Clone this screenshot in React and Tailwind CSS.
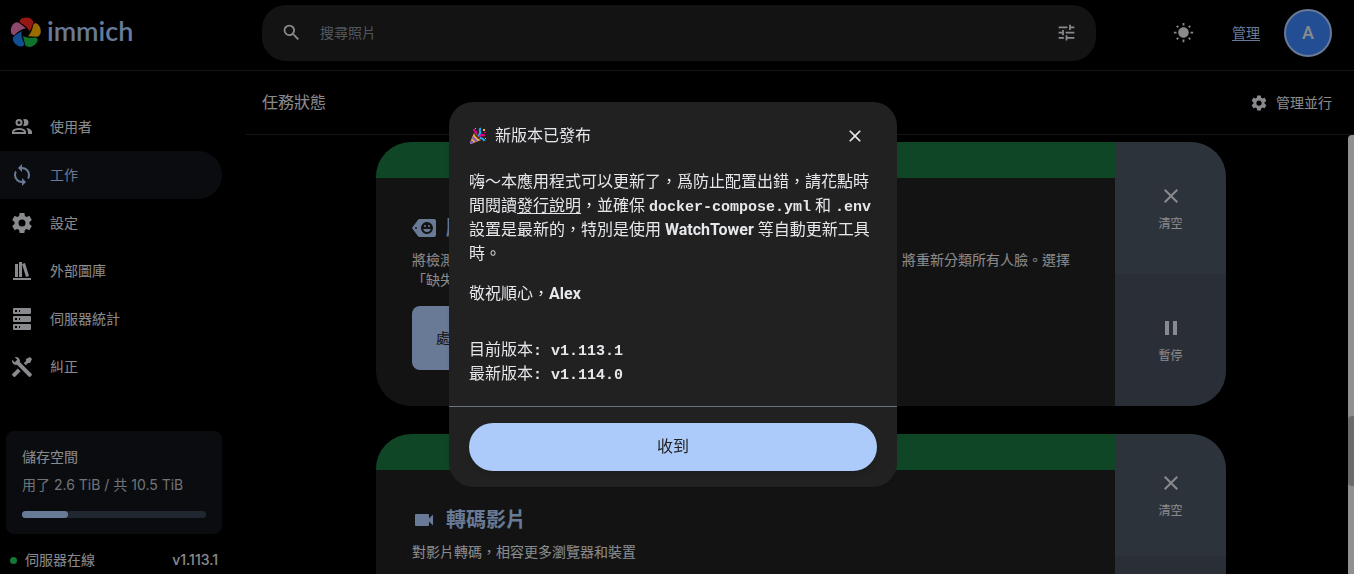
import clsx from "clsx";

// 24x24 icon paths
const paths = {
  magnify:
    "M9.5,3A6.5,6.5 0 0,1 16,9.5C16,11.11 15.41,12.59 14.44,13.73L14.71,14H15.5L20.5,19L19,20.5L14,15.5V14.71L13.73,14.44C12.59,15.41 11.11,16 9.5,16A6.5,6.5 0 0,1 3,9.5A6.5,6.5 0 0,1 9.5,3M9.5,5C7,5 5,7 5,9.5C5,12 7,14 9.5,14C12,14 14,12 14,9.5C14,7 12,5 9.5,5Z",
  tune: "M3,17V19H9V17H3M3,5V7H13V5H3M13,21V19H21V17H13V15H11V21H13M7,9V11H3V13H7V15H9V9H7M21,13V11H11V13H21M15,9H17V7H21V5H17V3H15V9Z",
  sunny:
    "M3.55 19.09L4.96 20.5L6.76 18.71L5.34 17.29M12 6C8.69 6 6 8.69 6 12S8.69 18 12 18 18 15.31 18 12C18 8.68 15.31 6 12 6M20 13H23V11H20M17.24 18.71L19.04 20.5L20.45 19.09L18.66 17.29M20.45 5L19.04 3.6L17.24 5.39L18.66 6.81M13 1H11V4H13M6.76 5.39L4.96 3.6L3.55 5L5.34 6.81L6.76 5.39M1 13H4V11H1M13 20H11V23H13",
  users:
    "M13.07 10.41A5 5 0 0 0 13.07 4.59A3.39 3.39 0 0 1 15 4A3.5 3.5 0 0 1 15 11A3.39 3.39 0 0 1 13.07 10.41M5.5 7.5A3.5 3.5 0 1 1 9 11A3.5 3.5 0 0 1 5.5 7.5M7.5 7.5A1.5 1.5 0 1 0 9 6A1.5 1.5 0 0 0 7.5 7.5M16 17V19H2V17S2 13 9 13 16 17 16 17M14 17C13.86 16.22 12.67 15 9 15S4.07 16.31 4 17M15.95 13A5.32 5.32 0 0 1 18 17V19H22V17S22 13.37 15.94 13Z",
  sync: "M12,18A6,6 0 0,1 6,12C6,11 6.25,10.03 6.7,9.2L5.24,7.74C4.46,8.97 4,10.43 4,12A8,8 0 0,0 12,20V23L16,19L12,15M12,4V1L8,5L12,9V6A6,6 0 0,1 18,12C18,13 17.75,13.97 17.3,14.8L18.76,16.26C19.54,15.03 20,13.57 20,12A8,8 0 0,0 12,4Z",
  cog: "M12,15.5A3.5,3.5 0 0,1 8.5,12A3.5,3.5 0 0,1 12,8.5A3.5,3.5 0 0,1 15.5,12A3.5,3.5 0 0,1 12,15.5M19.43,12.97C19.47,12.65 19.5,12.33 19.5,12C19.5,11.67 19.47,11.34 19.43,11L21.54,9.37C21.73,9.22 21.78,8.95 21.66,8.73L19.66,5.27C19.54,5.05 19.27,4.96 19.05,5.05L16.56,6.05C16.04,5.66 15.5,5.32 14.87,5.07L14.5,2.42C14.46,2.18 14.25,2 14,2H10C9.75,2 9.54,2.18 9.5,2.42L9.13,5.07C8.5,5.32 7.96,5.66 7.44,6.05L4.95,5.05C4.73,4.96 4.46,5.05 4.34,5.27L2.34,8.73C2.21,8.95 2.27,9.22 2.46,9.37L4.57,11C4.53,11.34 4.5,11.67 4.5,12C4.5,12.33 4.53,12.65 4.57,12.97L2.46,14.63C2.27,14.78 2.21,15.05 2.34,15.27L4.34,18.73C4.46,18.95 4.73,19.03 4.95,18.95L7.44,17.94C7.96,18.34 8.5,18.68 9.13,18.93L9.5,21.58C9.54,21.82 9.75,22 10,22H14C14.25,22 14.46,21.82 14.5,21.58L14.87,18.93C15.5,18.67 16.04,18.34 16.56,17.94L19.05,18.95C19.27,19.03 19.54,18.95 19.66,18.73L21.66,15.27C21.78,15.05 21.73,14.78 21.54,14.63L19.43,12.97Z",
  bookshelf: "M9 3V18H12V3H9M12 5L16 18L19 17L15 4L12 5M5 5V18H8V5H5M3 19V21H21V19H3Z",
  server:
    "M4,1H20A1,1 0 0,1 21,2V6A1,1 0 0,1 20,7H4A1,1 0 0,1 3,6V2A1,1 0 0,1 4,1M4,9H20A1,1 0 0,1 21,10V14A1,1 0 0,1 20,15H4A1,1 0 0,1 3,14V10A1,1 0 0,1 4,9M4,17H20A1,1 0 0,1 21,18V22A1,1 0 0,1 20,23H4A1,1 0 0,1 3,22V18A1,1 0 0,1 4,17M9,5H10V3H9V5M9,13H10V11H9V13M9,21H10V19H9V21M5,3V5H7V3H5M5,11V13H7V11H5M5,19V21H7V19H5Z",
  tools:
    "M21.71 20.29L20.29 21.71A1 1 0 0 1 18.88 21.71L7 9.85A3.81 3.81 0 0 1 6 10A4 4 0 0 1 2.22 4.7L4.76 7.24L5.29 6.71L6.71 5.29L7.24 4.76L4.7 2.22A4 4 0 0 1 10 6A3.81 3.81 0 0 1 9.85 7L21.71 18.88A1 1 0 0 1 21.71 20.29M2.29 18.88A1 1 0 0 0 2.29 20.29L3.71 21.71A1 1 0 0 0 5.12 21.71L10.59 16.25L7.76 13.42M20 2L16 4V6L13.83 8.17L15.83 10.17L18 8H20L22 4Z",
  close:
    "M19,6.41L17.59,5L12,10.59L6.41,5L5,6.41L10.59,12L5,17.59L6.41,19L12,13.41L17.59,19L19,17.59L13.41,12L19,6.41Z",
  pause: "M14,19H18V5H14M6,19H10V5H6V19Z",
  video:
    "M17,10.5V7A1,1 0 0,0 16,6H4A1,1 0 0,0 3,7V17A1,1 0 0,0 4,18H16A1,1 0 0,0 17,17V13.5L21,17.5V6.5L17,10.5Z",
  tagFaces:
    "M15,18C11.68,18 9,15.31 9,12C9,8.68 11.68,6 15,6A6,6 0 0,1 21,12A6,6 0 0,1 15,18M4,13A1,1 0 0,1 3,12A1,1 0 0,1 4,11A1,1 0 0,1 5,12A1,1 0 0,1 4,13M22,3H7.63C6.97,3 6.38,3.32 6,3.81L0,12L6,20.18C6.38,20.68 6.97,21 7.63,21H22A2,2 0 0,0 24,19V5C24,3.89 23.1,3 22,3M13,11A1,1 0 0,0 14,10A1,1 0 0,0 13,9A1,1 0 0,0 12,10A1,1 0 0,0 13,11M15,16C16.86,16 18.35,14.72 18.8,13H11.2C11.65,14.72 13.14,16 15,16M17,11A1,1 0 0,0 18,10A1,1 0 0,0 17,9A1,1 0 0,0 16,10A1,1 0 0,0 17,11Z",
};

function Icon({ name, className = "size-6" }) {
  return (
    <svg viewBox="0 0 24 24" fill="currentColor" aria-hidden="true" className={clsx("shrink-0", className)}>
      <path d={paths[name]} />
    </svg>
  );
}

const petals = ["#ffb400", "#18c249", "#1e83f7", "#ed79b5", "#fa2921"];

function Logo() {
  return (
    <a href="#home" className="flex items-center gap-1.5 text-[#adcbfa]">
      <svg viewBox="-47 -47 93 93" aria-hidden="true" className="size-[31px]">
        {petals.map((color, i) => (
          <path
            key={color}
            fill={color}
            transform={`rotate(${i * 72})`}
            d="M7 11 L34 12.500 Q41 12 45 1 C47 -12 40 -26 30 -28 Q24 -29 22.500 -22 C20 -8 15 3 7 11Z"
          />
        ))}
      </svg>
      <span className="pb-1 font-['Lato',sans-serif] text-[27px] leading-8 font-semibold">immich</span>
    </a>
  );
}

function PartyPopper() {
  return (
    <svg viewBox="0 0 18 18" aria-hidden="true" className="size-[18px] shrink-0">
      <path d="M5 6 L12 13 L2 17 Q0.500 17 1 15.500Z" fill="#fbb33c" />
      <path d="M4 9 L9 14 L6.500 15 L3 11.500Z M2.500 13 L5 15.500 L2 17 Q0.500 17 1 15.500Z" fill="#7a5cc8" />
      <path d="M5 6 Q8 6 10.500 9 Q12.500 11.500 12 13 Q9 12.500 7 10 Q5 8 5 6Z" fill="#5b3a1e" />
      <path d="M9 9 Q12 7 11 4 Q10 2 12 1.500" fill="none" stroke="#22a7f0" strokeWidth="2" />
      <path d="M10 10 Q12 7 16 8.500" fill="none" stroke="#e3008c" strokeWidth="2" />
      <path d="M11 11 Q14 11 15.500 14" fill="none" stroke="#22a7f0" strokeWidth="2" />
      <path d="M4 2h2v2h-2z M5 4h3v3h-2z M15 5h2v1h-2z" fill="#e3008c" />
      <path d="M14 2h2v2h-2z M6 1h1v1h-1z M16 11h1v1h-1z" fill="#fbb33c" />
    </svg>
  );
}

function Header() {
  return (
    <header className="flex h-[71px] shrink-0 items-center border-b border-[#242424] pr-[22px] pb-[5px]">
      <div className="w-[262px] shrink-0 pl-2.5">
        <Logo />
      </div>
      <form className="flex h-14 flex-1 items-center rounded-3xl bg-[#212121] px-[19px]">
        <button type="button" aria-label="搜尋">
          <Icon name="magnify" className="size-[21px]" />
        </button>
        <input
          type="text"
          aria-label="搜尋照片"
          placeholder="搜尋照片"
          className="min-w-0 flex-1 bg-transparent pl-[18px] text-sm outline-none placeholder:text-[#8a909b]"
        />
        <button type="button" aria-label="篩選">
          <Icon name="tune" className="size-[21px]" />
        </button>
      </form>
      <div className="flex shrink-0 items-center pl-[65px]">
        <button type="button" aria-label="切換主題" className="p-3">
          <Icon name="sunny" className="size-[21px]" />
        </button>
        <a href="#admin" className="pr-6 pl-6.5 text-sm text-[#adcbfa] underline underline-offset-2">
          管理
        </a>
        <button
          type="button"
          aria-label="帳戶"
          className="flex size-12 items-center justify-center rounded-full border-2 border-[#adcbfa] bg-[#3b82f6] text-lg font-medium"
        >
          A
        </button>
      </div>
    </header>
  );
}

const navItems = [
  { icon: "users", label: "使用者" },
  { icon: "sync", label: "工作", active: true },
  { icon: "cog", label: "設定" },
  { icon: "bookshelf", label: "外部圖庫" },
  { icon: "server", label: "伺服器統計" },
  { icon: "tools", label: "糾正" },
];

function Sidebar() {
  return (
    <aside className="w-[222px] shrink-0 overflow-hidden pt-8 font-['Inter','Noto_Sans_CJK_TC',sans-serif] text-sm">
      <nav>
        {navItems.map(({ icon, label, active }) => (
          <a
            key={label}
            href="#nav"
            className={clsx(
              "flex h-12 items-center gap-4 rounded-r-full pl-2.5",
              active && "bg-[#adcbfa]/10 text-[#adcbfa]",
            )}
          >
            <Icon name={icon} />
            {label}
          </a>
        ))}
      </nav>
      <section className="mt-10 ml-1.5 rounded-lg bg-[#adcbfa]/10 p-4">
        <h2>儲存空間</h2>
        <p className="mt-2 text-[#bcc0c8]">用了 2.6 TiB / 共 10.5 TiB</p>
        <div className="mt-4 h-[7px] rounded-full bg-[#374151]">
          <div className="h-full w-1/4 rounded-full bg-[#adcbfa]" />
        </div>
      </section>
      <div className="mt-4 flex items-center gap-2 pr-1 pl-2.5">
        <span className="size-[7px] rounded-full bg-[#22c55e]" />
        <span className="flex-1">伺服器在線</span>
        <span className="font-medium">v1.113.1</span>
      </div>
    </aside>
  );
}

function JobCard({ icon, title, description }) {
  return (
    <article className="flex overflow-hidden rounded-[35px] bg-[#212121]">
      <div className="min-w-0 flex-1">
        <div className="h-9 bg-[#19753e]" />
        <div className="p-9">
          <h2 className="flex items-center gap-2.5 text-xl leading-7 font-bold text-[#adcbfa]">
            <Icon name={icon} />
            {title}
          </h2>
          <p className="mt-2 text-sm">{description}</p>
          <div className="mt-4 flex h-16 max-w-md items-center rounded-lg bg-[#adcbfa] px-6 text-sm text-[#212121]">
            處理中
          </div>
        </div>
      </div>
      <div className="flex w-[111px] shrink-0 flex-col text-xs">
        <button type="button" className="flex flex-1 flex-col items-center justify-center gap-2 bg-[#4b5563]">
          <Icon name="close" />
          清空
        </button>
        <button type="button" className="flex flex-1 flex-col items-center justify-center gap-2 bg-[#474d5d]">
          <Icon name="pause" />
          暫停
        </button>
      </div>
    </article>
  );
}

function Jobs() {
  return (
    <main className="ml-6 flex min-w-0 flex-1 flex-col">
      <div className="flex h-16 shrink-0 items-center justify-between border-b border-[#242424] pr-[22px] pl-4">
        <h1>任務狀態</h1>
        <button type="button" className="flex items-center gap-2 text-sm">
          <Icon name="cog" className="size-[18px]" />
          管理並行
        </button>
      </div>
      <div className="flex min-h-0 flex-1">
        <div className="min-w-0 flex-1 overflow-hidden pt-[7px] pr-2 pl-4">
          <div className="mx-auto flex max-w-[850px] flex-col gap-7">
            <JobCard
              icon="tagFaces"
              title="臉部辨識"
              description="將檢測到的人臉按照人物分組。此步驟將在人臉檢測完成後執行。選擇「全部」將重新分類所有人臉。選擇「缺失」將尚未分類的人臉排入佇列。"
            />
            <JobCard icon="video" title="轉碼影片" description="對影片轉碼，相容更多瀏覽器和裝置" />
          </div>
        </div>
        <div aria-hidden="true" className="flex w-1.5 flex-col rounded-tl bg-[#f1f1f1]">
          <div className="flex-[281]" />
          <div className="flex-[70] rounded-l bg-[#b3b3b3]" />
          <div className="flex-[88]" />
        </div>
      </div>
    </main>
  );
}

function Code({ children }) {
  return <code className="font-['Liberation_Mono',monospace] text-[15px] leading-4 font-bold">{children}</code>;
}

function VersionDialog() {
  return (
    <div className="fixed inset-0 z-50 flex items-center justify-center bg-black/40 pt-[15px] pr-2">
      <div
        role="dialog"
        aria-modal="true"
        aria-labelledby="version-title"
        className="w-full max-w-md rounded-3xl bg-[#212121] shadow-md"
      >
        <div className="flex items-center justify-between px-5 py-3">
          <h1 id="version-title" className="flex items-center gap-2">
            <PartyPopper />
            新版本已發布
          </h1>
          <button type="button" aria-label="關閉" className="p-3">
            <Icon name="close" className="size-5" />
          </button>
        </div>
        <div className="px-5 pb-5">
          <p>
            嗨～本應用程式可以更新了，爲防止配置出錯，請花點時間閱讀
            <a href="#release-notes" className="underline underline-offset-2">
              發行說明
            </a>
            ，並確保 <Code>docker-compose.yml</Code> 和 <Code>.env</Code> 設置是最新的，特別是使用{" "}
            <b className="font-bold">WatchTower</b> 等自動更新工具時。
          </p>
          <p className="mt-4">
            敬祝順心，<b className="font-bold">Alex</b>
          </p>
          <div className="mt-8">
            <p>
              目前版本<Code>: v1.113.1</Code>
            </p>
            <p>
              最新版本<Code>: v1.114.0</Code>
            </p>
          </div>
        </div>
        <div className="border-t border-[#6b7280] px-5 py-4">
          <button type="button" className="h-12 w-full rounded-full bg-[#adcbfa] text-[#212121] shadow-md">
            收到
          </button>
        </div>
      </div>
    </div>
  );
}

export default function App() {
  return (
    <div
      lang="zh-Hant"
      className="flex h-screen flex-col overflow-hidden bg-black font-['Roboto','Noto_Sans_CJK_TC',sans-serif] text-[#e5e7eb]"
    >
      <Header />
      <div className="flex min-h-0 flex-1">
        <Sidebar />
        <Jobs />
      </div>
      <VersionDialog />
    </div>
  );
}
